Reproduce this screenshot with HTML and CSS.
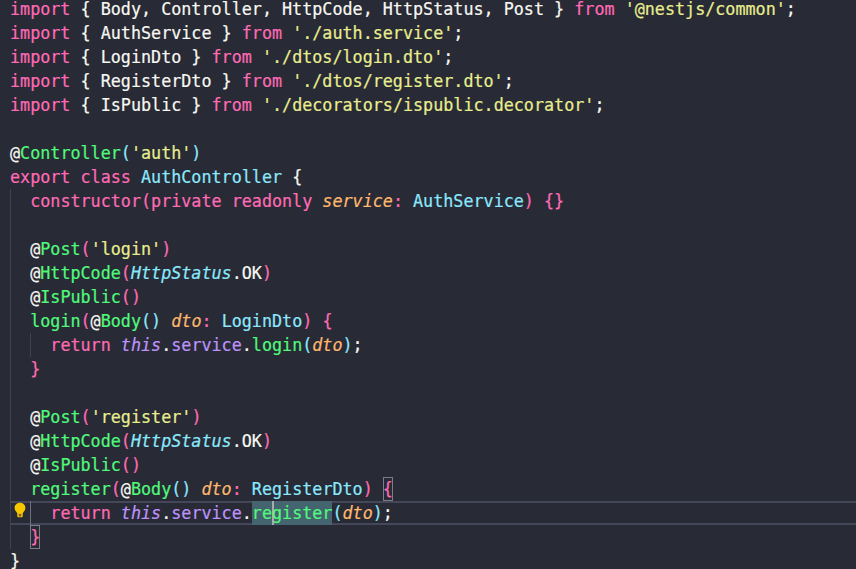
FILE: index.html
```html
<!DOCTYPE html>
<html lang="en">
<head>
    <meta charset="UTF-8">
    <meta name="viewport" content="width=device-width, initial-scale=1.0">
    <title>auth.controller.ts</title>
    <link rel="stylesheet" href="styles.css">
</head>
<body>
    <main class="editor">
        <div class="line"><span class="kw">import</span> <span class="wh">{</span> <span class="wh">Body, Controller, HttpCode, HttpStatus, Post</span> <span class="wh">}</span> <span class="kw">from</span> <span class="str">'@nestjs/common'</span><span class="wh">;</span></div>
        <div class="line"><span class="kw">import</span> <span class="wh">{ AuthService }</span> <span class="kw">from</span> <span class="str">'./auth.service'</span><span class="wh">;</span></div>
        <div class="line"><span class="kw">import</span> <span class="wh">{ LoginDto }</span> <span class="kw">from</span> <span class="str">'./dtos/login.dto'</span><span class="wh">;</span></div>
        <div class="line"><span class="kw">import</span> <span class="wh">{ RegisterDto }</span> <span class="kw">from</span> <span class="str">'./dtos/register.dto'</span><span class="wh">;</span></div>
        <div class="line"><span class="kw">import</span> <span class="wh">{ IsPublic }</span> <span class="kw">from</span> <span class="str">'./decorators/ispublic.decorator'</span><span class="wh">;</span></div>
        <div class="line"></div>
        <div class="line"><span class="wh">@</span><span class="fn">Controller</span><span class="cy">(</span><span class="str">'auth'</span><span class="cy">)</span></div>
        <div class="line"><span class="kw">export class</span> <span class="cy">AuthController</span> <span class="wh">{</span></div>
        <div class="line"><span class="guide"></span><span class="kw">constructor(private readonly</span> <span class="param">service</span><span class="kw">:</span> <span class="cy">AuthService</span><span class="kw">) {}</span></div>
        <div class="line"><span class="guide"></span></div>
        <div class="line"><span class="guide"></span><span class="wh">@</span><span class="fn">Post</span><span class="kw">(</span><span class="str">'login'</span><span class="kw">)</span></div>
        <div class="line"><span class="guide"></span><span class="wh">@</span><span class="fn">HttpCode</span><span class="kw">(</span><span class="cy it">HttpStatus</span><span class="wh">.OK</span><span class="kw">)</span></div>
        <div class="line"><span class="guide"></span><span class="wh">@</span><span class="fn">IsPublic</span><span class="kw">()</span></div>
        <div class="line"><span class="guide"></span><span class="fn">login</span><span class="kw">(</span><span class="wh">@</span><span class="fn">Body</span><span class="cy">()</span> <span class="param">dto</span><span class="kw">:</span> <span class="cy">LoginDto</span><span class="kw">) {</span></div>
        <div class="line"><span class="guide"></span><span class="guide"></span><span class="kw">return</span> <span class="pu it">this</span><span class="wh">.</span><span class="pu">service</span><span class="wh">.</span><span class="fn">login</span><span class="cy">(</span><span class="param">dto</span><span class="cy">)</span><span class="wh">;</span></div>
        <div class="line"><span class="guide"></span><span class="kw">}</span></div>
        <div class="line"><span class="guide"></span></div>
        <div class="line"><span class="guide"></span><span class="wh">@</span><span class="fn">Post</span><span class="kw">(</span><span class="str">'register'</span><span class="kw">)</span></div>
        <div class="line"><span class="guide"></span><span class="wh">@</span><span class="fn">HttpCode</span><span class="kw">(</span><span class="cy it">HttpStatus</span><span class="wh">.OK</span><span class="kw">)</span></div>
        <div class="line"><span class="guide"></span><span class="wh">@</span><span class="fn">IsPublic</span><span class="kw">()</span></div>
        <div class="line"><span class="guide"></span><span class="fn">register</span><span class="kw">(</span><span class="wh">@</span><span class="fn">Body</span><span class="cy">()</span> <span class="param">dto</span><span class="kw">:</span> <span class="cy">RegisterDto</span><span class="kw">)</span> <span class="kw match">{</span></div>
        <div class="line current"><svg class="bulb" width="12" height="16" viewBox="0 0 14 18"><path d="M7 .5C3.400.5.700 3.100.700 6.500c0 2.400 1.300 3.800 2.300 5 .5.600.8 1.300.8 2V16c0 .9.700 1.600 1.600 1.600h3.200c.9 0 1.600-.7 1.600-1.600v-2.500c0-.7.300-1.400.8-2 1-1.200 2.300-2.600 2.300-5C13.300 3.100 10.600.5 7 .5z" fill="#f6c700"/><rect x="5.500" y="13.500" width="3" height="3" fill="#7a6a20"/></svg><span class="guide"></span><span class="guide active"></span><span class="kw">return</span> <span class="pu it">this</span><span class="wh">.</span><span class="pu">service</span><span class="wh">.</span><span class="selection fn">re<i class="caret"></i>gister</span><span class="cy">(</span><span class="param">dto</span><span class="cy">)</span><span class="wh">;</span></div>
        <div class="line"><span class="guide"></span><span class="kw match">}</span></div>
        <div class="line"><span class="wh">}</span></div>
    </main>
</body>
</html>
```
FILE: styles.css
```css
* {
    box-sizing: border-box;
}

html, body {
    height: 100%;
    margin: 0;
    overflow: hidden;
}

body {
    background-color: #282a36;
}

.editor {
    margin-top: -3px;
    font-family: "DejaVu Sans Mono", monospace;
    font-size: 16.74px;
    color: #f8f8f2;
    -webkit-text-stroke: 0.2px;
}

.line {
    height: 24px;
    line-height: 24px;
    padding-left: 10px;
    white-space: pre;
}

/* indent guides, one per depth */
.guide {
    display: inline-block;
    width: 20.16px;
    height: 24px;
    vertical-align: top;
    border-left: 1px solid #3f4250;
}

.guide.active {
    border-left-color: #6c6f7c;
}

/* highlight starts at the first guide, not at the window edge */
.current {
    position: relative;
    margin-left: 10px;
    padding-left: 0;
    box-shadow: inset 0 2px 0 #44475a, inset 0 -2px 0 #44475a;
}

.bulb {
    position: absolute;
    left: 4px;
    top: 1px;
}

.selection {
    display: inline-block;
    height: 24px;
    vertical-align: top;
    background-color: #44646f;
}

.caret {
    display: inline-block;
    width: 2px;
    height: 24px;
    margin: 0 -1.5px 0 -0.5px;
    vertical-align: top;
    background-color: #a8aaae;
}

.match {
    display: inline-block;
    height: 24px;
    vertical-align: top;
    outline: 1px solid #7b7d88;
    outline-offset: -1px;
}

.kw { color: #ff6bb5; }
.wh { color: #f8f8f2; }
.str { color: #e9ee8e; }
.fn { color: #50fa7b; }
.cy { color: #8be9fd; }
.pu { color: #bd93f9; }
.param { color: #ffb86c; font-style: italic; }
.it { font-style: italic; }
```
